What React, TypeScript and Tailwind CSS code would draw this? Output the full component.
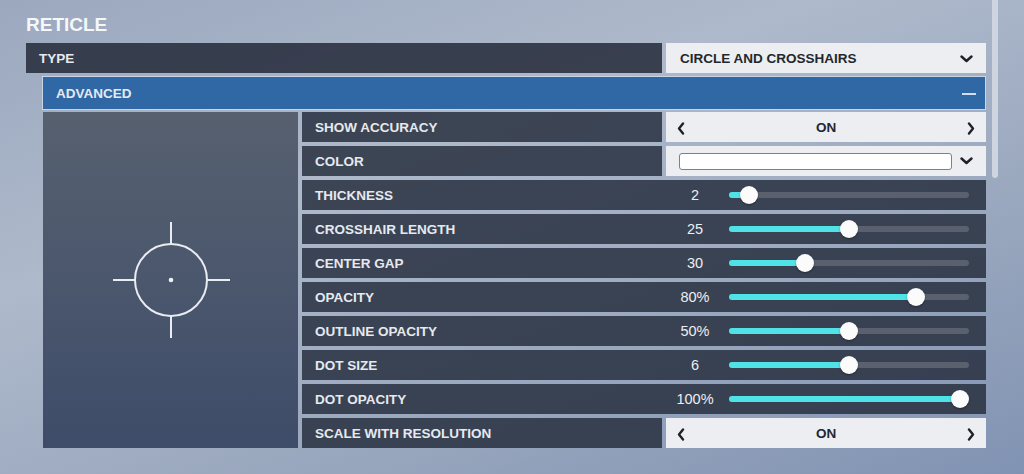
import React from "react";

type Row =
  | { kind: "toggle"; label: string; value: string }
  | { kind: "color"; label: string }
  | { kind: "slider"; label: string; value: string; pct: number };

const rows: Row[] = [
  { kind: "toggle", label: "SHOW ACCURACY", value: "ON" },
  { kind: "color", label: "COLOR" },
  { kind: "slider", label: "THICKNESS", value: "2", pct: 0.05 },
  { kind: "slider", label: "CROSSHAIR LENGTH", value: "25", pct: 0.5 },
  { kind: "slider", label: "CENTER GAP", value: "30", pct: 0.3 },
  { kind: "slider", label: "OPACITY", value: "80%", pct: 0.8 },
  { kind: "slider", label: "OUTLINE OPACITY", value: "50%", pct: 0.5 },
  { kind: "slider", label: "DOT SIZE", value: "6", pct: 0.5 },
  { kind: "slider", label: "DOT OPACITY", value: "100%", pct: 1 },
  { kind: "toggle", label: "SCALE WITH RESOLUTION", value: "ON" },
];

function ChevronDown() {
  return (
    <svg width="13" height="8" viewBox="0 0 13 8" fill="none">
      <path d="M1.5 1.5 L6.5 6 L11.5 1.5" stroke="#1e2228" strokeWidth="2.4" strokeLinecap="round" strokeLinejoin="round" />
    </svg>
  );
}

function ChevronSide({ dir }: { dir: "left" | "right" }) {
  const d = dir === "left" ? "M6 1.5 L2 6.5 L6 11.5" : "M2 1.5 L6 6.5 L2 11.5";
  return (
    <svg width="8" height="13" viewBox="0 0 8 13" fill="none">
      <path d={d} stroke="#1e2228" strokeWidth="2.4" strokeLinecap="round" strokeLinejoin="round" />
    </svg>
  );
}

function Slider({ pct }: { pct: number }) {
  return (
    <div className="relative h-[18px] w-[240px]">
      <div className="absolute left-0 right-0 top-[6px] h-[6px] rounded-full bg-[#5b606e]" />
      <div
        className="absolute left-0 top-[6px] h-[6px] rounded-full bg-[#4fe2e6]"
        style={{ width: `${9 + pct * 222}px` }}
      />
      <div
        className="absolute top-0 h-[18px] w-[18px] rounded-full bg-[#fbfbfc] shadow-[0_1px_2px_rgba(0,0,0,0.35)]"
        style={{ left: `${pct * 222}px` }}
      />
    </div>
  );
}

function Reticle() {
  return (
    <svg width="124" height="124" viewBox="-62 -62 124 124" fill="none">
      <g stroke="#e9edf2" strokeWidth="2">
        <circle cx="0" cy="0" r="36" />
        <line x1="0" y1="-58" x2="0" y2="-36" />
        <line x1="0" y1="36" x2="0" y2="58" />
        <line x1="-58" y1="0" x2="-36" y2="0" />
        <line x1="36" y1="0" x2="59" y2="0" />
      </g>
      <circle cx="0" cy="0" r="2.3" fill="#eef1f5" />
    </svg>
  );
}

function SettingRow({ row }: { row: Row }) {
  const label = "text-[13.5px] font-bold text-[#e6e9ee]";
  if (row.kind === "slider") {
    return (
      <div className="flex h-[30px] items-center bg-[#283040]/85 pt-[2px]">
        <div className={`flex-1 pl-[13px] ${label}`}>{row.label}</div>
        <div className="flex w-[320px] items-center">
          <div className="w-[58px] text-center text-[14.5px] text-[#eceef2]">{row.value}</div>
          <div className="ml-[5px] -mt-[2px]">
            <Slider pct={row.pct} />
          </div>
        </div>
      </div>
    );
  }
  return (
    <div className="flex h-[30px] gap-[4px]">
      <div className={`flex flex-1 items-center bg-[#283040]/85 pl-[13px] pt-[2px] ${label}`}>{row.label}</div>
      {row.kind === "toggle" ? (
        <div className="flex w-[320px] items-center justify-between bg-[#eceef1] px-[11px] pt-[2px]">
          <ChevronSide dir="left" />
          <span className="text-[13.5px] font-bold text-[#23272e]">{row.value}</span>
          <ChevronSide dir="right" />
        </div>
      ) : (
        <div className="flex w-[320px] items-center gap-[8px] bg-[#eceef1] pl-[13px] pr-[13px]">
          <div className="h-[17px] flex-1 rounded-[3px] border border-[#7b8089] bg-white" />
          <ChevronDown />
        </div>
      )}
    </div>
  );
}

export default function App() {
  return (
    <div className="relative h-[474px] w-[1024px] overflow-hidden bg-[linear-gradient(160deg,#9ba8be_0%,#aeb9cb_35%,#98a6bd_70%,#8193b3_100%)] font-['Liberation_Sans',Arial,sans-serif]">
      <div className="absolute left-[992px] top-0 h-[178px] w-[6px] rounded-b-full bg-[#cfd5de]" />

      <div className="pl-[26px] pt-[16px]">
        <h1 className="text-[19px] font-bold leading-[18px] text-[#f5f7f9]">RETICLE</h1>

        <div className="mt-[9px] flex h-[30px] w-[960px] gap-[4px]">
          <div className="flex flex-1 items-center bg-[#232938]/85 pl-[13px] pt-[2px] text-[13.5px] font-bold text-[#e6e9ee]">
            TYPE
          </div>
          <div className="flex w-[320px] items-center justify-between bg-[#eceef1] pl-[14px] pr-[13px] pt-[2px]">
            <span className="text-[13.5px] font-bold text-[#23272e]">CIRCLE AND CROSSHAIRS</span>
            <ChevronDown />
          </div>
        </div>

        <div className="ml-[16px] mt-[3px] flex h-[34px] w-[944px] items-center justify-between border border-[#c9d4e4] bg-[#2f68a5] pl-[13px] pr-[9px] pt-[2px]">
          <span className="text-[13.5px] font-bold text-[#e4eaf2]">ADVANCED</span>
          <div className="h-[2px] w-[14px] bg-[#d3ddeb]" />
        </div>

        <div className="ml-[17px] mt-[2px] flex w-[943px] gap-[4px]">
          <div className="flex w-[255px] items-center justify-center bg-[linear-gradient(180deg,#56606f_0%,#4b576d_50%,#3f4c69_100%)]">
            <Reticle />
          </div>
          <div className="flex w-[684px] flex-col gap-[4px]">
            {rows.map((row) => (
              <SettingRow key={row.label} row={row} />
            ))}
          </div>
        </div>
      </div>
    </div>
  );
}
